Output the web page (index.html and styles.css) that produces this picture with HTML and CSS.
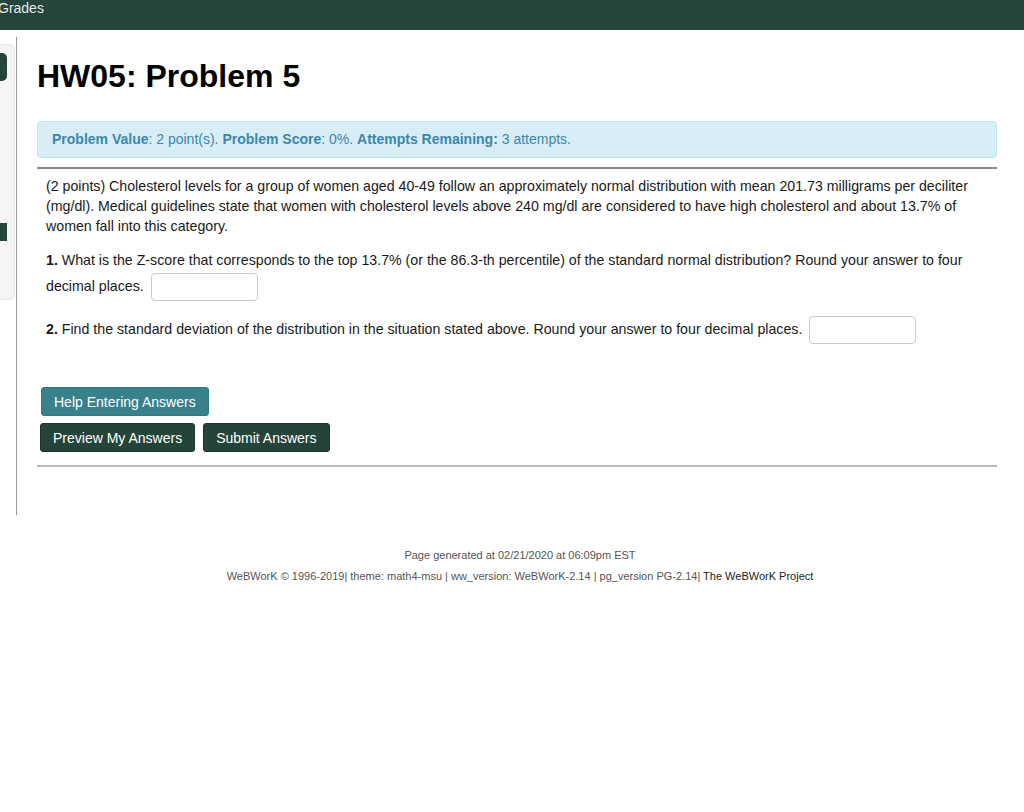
FILE: index.html
```html
<!DOCTYPE html>
<html>
<head>
<meta charset="utf-8">
<title>HW05: Problem 5</title>
<link rel="stylesheet" href="styles.css">
</head>
<body>
<div class="topbar"><span class="topbar-link">Grades</span></div>
<div class="layout">
  <div class="sidebar">
    <div class="well">
      <div class="well-btn"></div>
      <div class="well-bar"></div>
    </div>
  </div>
  <div class="main">
    <h1 class="title">HW05: Problem 5</h1>
    <div class="alert"><b>Problem Value</b>: 2 point(s). <b>Problem Score</b>: 0%. <b>Attempts Remaining:</b> 3 attempts.</div>
    <div class="problem">
      <p class="para">(2 points) Cholesterol levels for a group of women aged 40-49 follow an approximately normal distribution with mean 201.73 milligrams per deciliter (mg/dl). Medical guidelines state that women with cholesterol levels above 240 mg/dl are considered to have high cholesterol and about 13.7% of women fall into this category.</p>
      <p class="para q1"><b>1.</b> What is the Z-score that corresponds to the top 13.7% (or the 86.3-th percentile) of the standard normal distribution? Round your answer to four decimal places. <input class="answer" type="text"></p>
      <p class="para q2"><b>2.</b> Find the standard deviation of the distribution in the situation stated above. Round your answer to four decimal places. <input class="answer" type="text"></p>
    </div>
    <div class="actions">
      <div class="row"><button class="btn btn-help">Help Entering Answers</button></div>
      <div class="row"><button class="btn btn-dark">Preview My Answers</button><button class="btn btn-dark">Submit Answers</button></div>
    </div>
    <div class="rule"></div>
  </div>
</div>
<div class="footer">
  <div class="footer-line">Page generated at 02/21/2020 at 06:09pm EST</div>
  <div class="footer-line">WeBWorK © 1996-2019| theme: math4-msu | ww_version: WeBWorK-2.14 | pg_version PG-2.14| <span class="footer-link">The WeBWorK Project</span></div>
</div>
</body>
</html>
```
FILE: styles.css
```css
html, body {
  margin: 0;
  padding: 0;
  background: #fff;
}
body {
  font-family: "Liberation Sans", Arial, Helvetica, sans-serif;
  color: #222;
  width: 1024px;
  overflow: hidden;
}
.topbar {
  height: 30px;
  background: #25443b;
  overflow: hidden;
}
.topbar-link {
  display: block;
  margin-left: -2px;
  padding-top: 0;
  font-size: 14px;
  line-height: 16px;
  color: #e6ece9;
}
.layout {
  display: flex;
  align-items: flex-start;
  padding-top: 7px;
}
.sidebar {
  width: 16px;
  flex: 0 0 16px;
  overflow: hidden;
}
.well {
  margin-top: 7px;
  margin-left: -185px;
  width: 198px;
  height: 246px;
  background: #f5f5f5;
  border: 1px solid #e6e6e6;
  border-radius: 6px;
  padding-top: 8px;
  box-sizing: content-box;
}
.well-btn {
  margin-left: 120px;
  margin-right: 7px;
  height: 28px;
  background: #25443b;
  border-radius: 5px;
}
.well-bar {
  margin-top: 142px;
  margin-left: 120px;
  margin-right: 7px;
  height: 18px;
  background: #25443b;
}
.main {
  width: 960px;
  border-left: 1px solid #9a9a9a;
  padding-left: 20px;
  height: 478px;
}
.title {
  margin: 0;
  padding-top: 21px;
  font-size: 32px;
  line-height: 36px;
  font-weight: bold;
  color: #000;
}
.alert {
  margin-top: 27px;
  height: 35px;
  line-height: 35px;
  padding-left: 14px;
  background: #d9edf7;
  border: 1px solid #bce8f1;
  border-radius: 4px;
  color: #3a87ad;
  font-size: 14px;
}
.alert b {
  font-weight: bold;
}
.problem {
  margin-top: 9px;
  border-top: 2px solid #8a8a8a;
  padding: 7px 22px 0 9px;
  font-size: 14.2px;
  line-height: 20px;
  color: #1a1a1a;
}
.para {
  margin: 0 0 14px 0;
}
.q1 {
  line-height: 25px;
  margin-top: -2px;
}
.q2 {
  margin-top: 14px;
  line-height: 28px;
}
.answer {
  width: 107px;
  height: 28px;
  box-sizing: border-box;
  border: 1px solid #cccccc;
  border-radius: 4px;
  vertical-align: middle;
  margin-left: 3px;
  font-size: 13px;
}
.actions {
  margin-top: 43px;
  display: flex;
  flex-direction: column;
  gap: 7px;
  padding-left: 3px;
}
.row {
  display: flex;
  gap: 8px;
}
.btn {
  height: 29px;
  padding: 0 12px;
  font-family: "Liberation Sans", Arial, Helvetica, sans-serif;
  font-size: 14px;
  color: #fff;
  border-radius: 3px;
  border: 1px solid transparent;
  cursor: pointer;
}
.btn-help {
  background: #38818a;
  border-color: #347880;
  margin-left: 1px;
}
.btn-dark {
  background: #24443a;
  border-color: #1b352d;
}
.rule {
  margin-top: 13px;
  border-top: 2px solid #bdbdbd;
}
.footer {
  margin-left: 16px;
  padding-top: 30px;
  text-align: center;
  font-size: 11px;
  line-height: 21px;
  color: #555;
}
.footer-link {
  color: #222;
}
```
